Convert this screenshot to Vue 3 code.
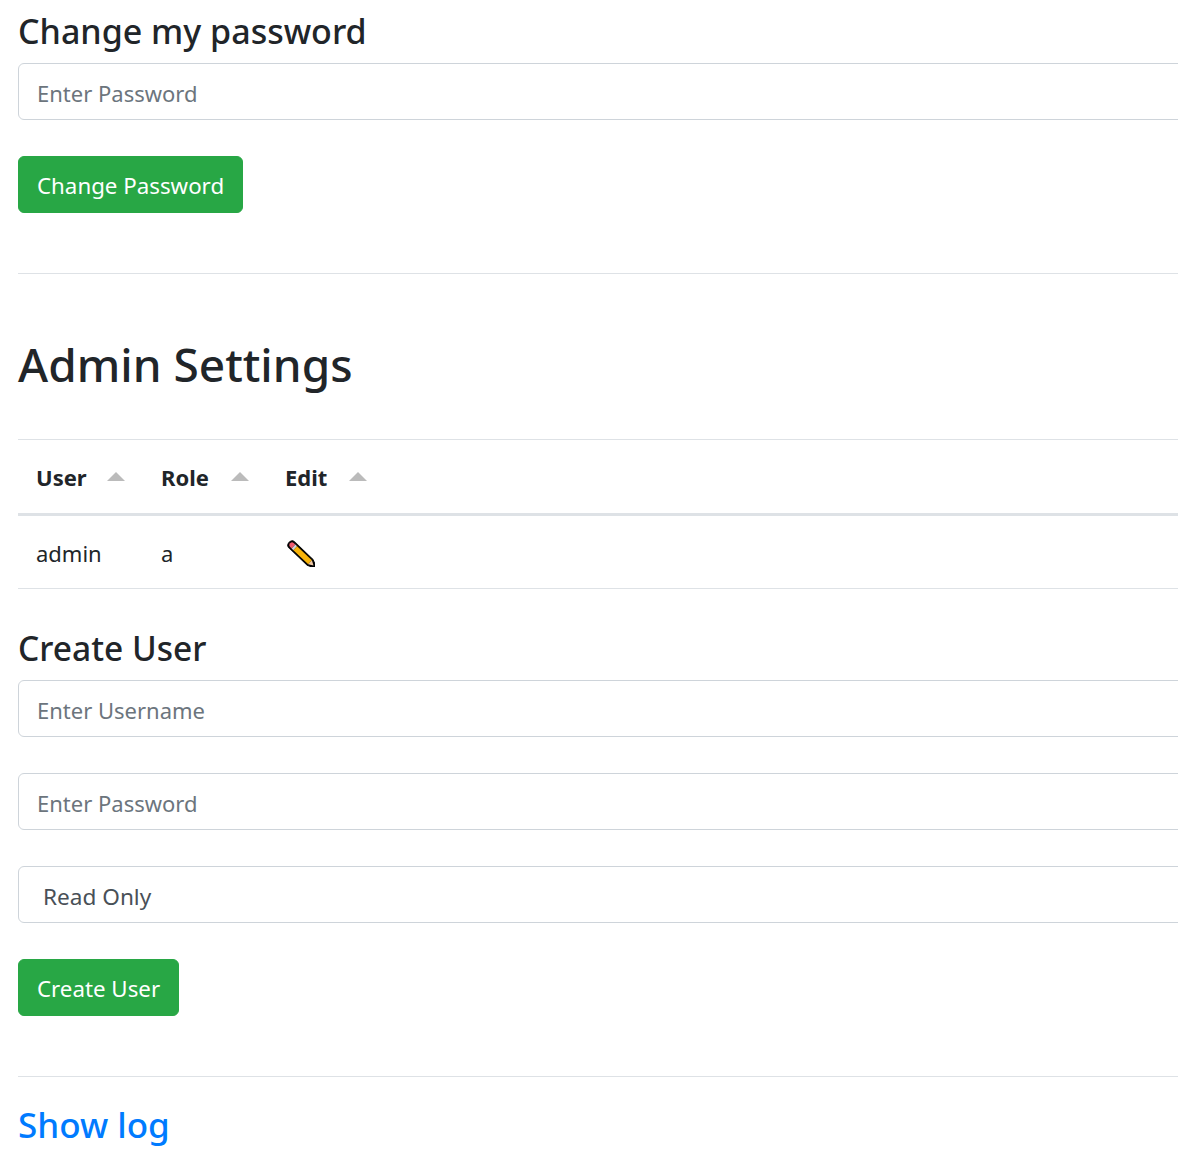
<script setup>
const columns = ['User', 'Role', 'Edit']
</script>

<template>
  <main class="page">
    <h4 class="first">Change my password</h4>
    <input class="field" type="password" placeholder="Enter Password" />
    <button class="btn">Change Password</button>
    <hr class="rule-one" />
    <h2>Admin Settings</h2>
    <table>
      <thead>
        <tr>
          <th v-for="c in columns" :key="c" :class="'col-' + c.toLowerCase()">
            <span class="th-inner">{{ c }}<i class="arrow"></i></span>
          </th>
          <th class="filler"></th>
        </tr>
      </thead>
      <tbody>
        <tr>
          <td>admin</td>
          <td>a</td>
          <td class="edit">
            <svg width="28" height="27" viewBox="0 0 28 27" class="pencil">
              <g transform="translate(3.6 3.8) rotate(43.5)">
                <path d="M1.5 -4H27L33.5 -1.4Q34.8 0 33.5 1.4L27 4H1.5Q-2 4 -2 0Q-2 -4 1.5 -4Z" fill="#000" stroke="#000" stroke-width="1" />
                <path d="M1.6 -2.7H4V2.7H1.6Q-.7 2.7 -.7 0Q-.7 -2.7 1.6 -2.7Z" fill="#ef5a6f" />
                <rect x="4" y="-2.7" width="2.4" height="5.4" fill="#cfd3d8" />
                <rect x="6.4" y="-2.7" width="20.4" height="5.4" fill="#f8b40a" />
                <path d="M26.8 -2.7L31.6 0L26.8 2.7Z" fill="#f0c9a6" />
              </g>
            </svg>
          </td>
          <td></td>
        </tr>
      </tbody>
    </table>
    <h4 class="create">Create User</h4>
    <div class="stack">
      <input class="field" type="text" placeholder="Enter Username" />
      <input class="field" type="password" placeholder="Enter Password" />
      <div class="field select">Read Only</div>
    </div>
    <button class="btn">Create User</button>
    <hr class="rule-two" />
    <a class="log" href="#">Show log</a>
  </main>
</template>

<style scoped>
.page {
  width: 1178px;
  height: 1153px;
  overflow: hidden;
  box-sizing: border-box;
  padding: 11px 0 0 18px;
  font-family: "Noto Sans", sans-serif;
  color: #212529;
  background: #fff;
}
h4, h2 { margin: 0; font-weight: 500; line-height: 1.2; }
h4 { font-size: 34px; height: 43px; margin-bottom: 9px; }
h2 { font-size: 46px; height: 58px; margin-top: 63px; margin-bottom: 44px; }
.field {
  display: block;
  box-sizing: border-box;
  width: 1300px;
  height: 57px;
  padding: 10px 18px 8px;
  border: 1px solid #ced4da;
  border-radius: 6px;
  font: 22px/1.5 "Noto Sans", sans-serif;
  color: #495057;
  background: #fff;
  outline: none;
}
.field::placeholder { color: #6c757d; opacity: 1; }
.select { padding: 13px 18px 5px 24px; font-size: 22.6px; }
.btn {
  display: block;
  height: 57px;
  margin-top: 36px;
  padding: 2px 18px 0;
  border: 1px solid #28a745;
  border-radius: 6px;
  background: #28a745;
  color: #fff;
  font: 22.3px/1.5 "Noto Sans", sans-serif;
}
hr { width: 1300px; margin: 0; border: 0; border-top: 1px solid #dee2e6; }
.rule-one { margin-top: 60px; }
.rule-two { margin-top: 60px; }
.stack { display: flex; flex-direction: column; gap: 36px; }
table {
  width: 1160px;
  table-layout: fixed;
  border-collapse: collapse;
  font-size: 22px;
}
th, td { padding: 18px; text-align: left; line-height: 36px; }
th { border-top: 1px solid #dee2e6; border-bottom: 3px solid #dee2e6; font-weight: 700; height: 75px; box-sizing: border-box; }
td { border-bottom: 1px solid #dee2e6; height: 73px; box-sizing: border-box; padding-top: 19px; padding-bottom: 17px; }
.col-user { width: 125px; }
.col-role { width: 124px; }
.col-edit { width: 118px; }
.th-inner { display: flex; align-items: center; justify-content: space-between; }
.arrow { width: 0; height: 0; border-left: 9px solid transparent; border-right: 9px solid transparent; border-bottom: 9px solid #bbb; }
td.edit { padding: 2px 0 0 20px; }
.pencil { display: block; }
.create { margin-top: 39px; margin-bottom: 9px; font-size: 33.5px; }
.log { display: block; margin-top: 27px; font-size: 35px; line-height: 1.2; color: #007bff; text-decoration: none; font-weight: 500; }
</style>

<style>
html, body { margin: 0; overflow: hidden; background: #fff; }
</style>
